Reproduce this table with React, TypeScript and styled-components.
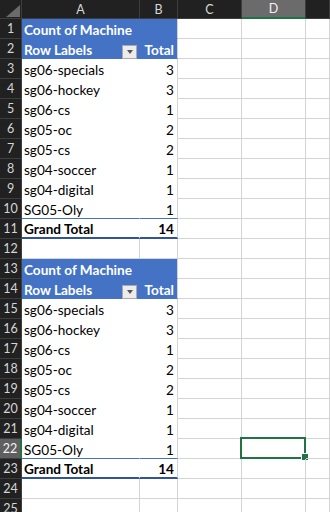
import React from "react"
import styled, { createGlobalStyle } from "styled-components"

const GRID = "#d4d4d4"
const BLUE = "#4472c4"
const DARK_BLUE = "#2f5597"
const GREEN = "#217346"
const HEAD_BG = "#212121"
const HEAD_LINE = "#3d3d3d"

type Item = [string, number]

const items: Item[] = [
	["sg06-specials", 3],
	["sg06-hockey", 3],
	["sg06-cs", 1],
	["sg05-oc", 2],
	["sg05-cs", 2],
	["sg04-soccer", 1],
	["sg04-digital", 1],
	["SG05-Oly", 1],
]

const pivotStarts = [1, 13]
const columns = ["A", "B", "C", "D", ""]
const ROW_COUNT = 25
const ACTIVE = { col: "D", row: 22 }

const GlobalStyle = createGlobalStyle`
	html, body {
		margin: 0;
		padding: 0;
		background: #ffffff;
	}
	body {
		font-family: Lato, "Liberation Sans", sans-serif;
		overflow: hidden;
	}
`

const Sheet = styled.div`
	display: grid;
	grid-template-columns: 22px 118px 38px 64px 64px 24px;
	grid-template-rows: 19px;
	grid-auto-rows: 20px;
	width: 330px;
	height: 512px;
	overflow: hidden;
	font-size: 13.6px;
`

const Corner = styled.div`
	box-sizing: border-box;
	background: ${HEAD_BG};
	border-right: 1px solid ${HEAD_LINE};
	border-bottom: 1px solid ${HEAD_LINE};
	display: flex;
	align-items: flex-end;
	justify-content: flex-end;
	padding: 0 1px 1px 0;
`

const ColHeader = styled.div<{ $selected?: boolean }>`
	box-sizing: border-box;
	background: ${(p) => (p.$selected ? "#6b6b6b" : HEAD_BG)};
	color: ${(p) => (p.$selected ? "#f2f2f2" : "#d6d6d6")};
	border-right: 1px solid ${HEAD_LINE};
	border-bottom: ${(p) => (p.$selected ? `2px solid ${GREEN}` : `1px solid ${HEAD_LINE}`)};
	display: flex;
	align-items: center;
	justify-content: center;
	font-size: 12.5px;
`

const RowHeader = styled.div<{ $selected?: boolean }>`
	box-sizing: border-box;
	background: ${(p) => (p.$selected ? "#5f5f5f" : HEAD_BG)};
	color: ${(p) => (p.$selected ? "#f2f2f2" : "#d6d6d6")};
	border-bottom: 1px solid ${HEAD_LINE};
	border-right: ${(p) => (p.$selected ? `2px solid ${GREEN}` : `1px solid ${HEAD_LINE}`)};
	display: flex;
	align-items: center;
	justify-content: center;
	font-size: 12.5px;
`

const Cell = styled.div<{ $right?: string; $bottom?: string; $numeric?: boolean }>`
	position: relative;
	box-sizing: border-box;
	border-right: 1px solid ${(p) => p.$right ?? GRID};
	border-bottom: ${(p) => p.$bottom ?? `1px solid ${GRID}`};
	display: flex;
	align-items: flex-end;
	justify-content: ${(p) => (p.$numeric ? "flex-end" : "flex-start")};
	padding: 0 3px 0 2px;
	line-height: 16px;
	color: #000000;
	white-space: nowrap;
`

const PivotHeadCell = styled(Cell)`
	background: ${BLUE};
	color: #ffffff;
	font-weight: 700;
`

const PivotTotalCell = styled(Cell)`
	font-weight: 700;
`

const FilterButton = styled.span`
	box-sizing: border-box;
	width: 15px;
	height: 14px;
	margin-left: auto;
	margin-right: -1px;
	margin-bottom: -1px;
	background: #ececec;
	border: 1px solid #a9a9a9;
	display: flex;
	align-items: center;
	justify-content: center;

	&::after {
		content: "";
		border-left: 3.5px solid transparent;
		border-right: 3.5px solid transparent;
		border-top: 4px solid #555555;
	}
`

const Selection = styled.div`
	position: absolute;
	top: -2px;
	left: -2px;
	right: -1px;
	bottom: -1px;
	border: 2px solid ${GREEN};
	pointer-events: none;
`

const FillHandle = styled.div`
	position: absolute;
	right: -3px;
	bottom: -2px;
	width: 6px;
	height: 6px;
	background: ${GREEN};
	box-shadow: 0 0 0 1px #ffffff;
`

const CornerTriangle: React.FC = () => (
	<svg width="14" height="12" viewBox="0 0 14 12">
		<polygon points="14,0 14,12 0,12" fill="#6b6b6b" />
	</svg>
)

const pivotCells = (row: number): React.ReactNode => {
	const start = pivotStarts.find((s) => row >= s && row <= s + 10)
	if (start === undefined) {
		return (
			<>
				<Cell />
				<Cell />
			</>
		)
	}
	const offset = row - start
	if (offset === 0) {
		return (
			<>
				<PivotHeadCell $right={BLUE} $bottom={`1px solid ${BLUE}`}>
					Count of Machine
				</PivotHeadCell>
				<PivotHeadCell $bottom={`1px solid ${BLUE}`} />
			</>
		)
	}
	if (offset === 1) {
		return (
			<>
				<PivotHeadCell $right={BLUE} $bottom={`1px solid ${BLUE}`}>
					Row Labels
					<FilterButton />
				</PivotHeadCell>
				<PivotHeadCell $numeric $bottom={`1px solid ${BLUE}`}>
					Total
				</PivotHeadCell>
			</>
		)
	}
	if (offset === 10) {
		const total = items.reduce((sum, [, count]) => sum + count, 0)
		return (
			<>
				<PivotTotalCell $right="#ffffff" $bottom={`2px solid ${DARK_BLUE}`}>
					Grand Total
				</PivotTotalCell>
				<PivotTotalCell $numeric $bottom={`2px solid ${DARK_BLUE}`}>
					{total}
				</PivotTotalCell>
			</>
		)
	}
	const [label, count] = items[offset - 2]
	const bottom = offset === 9 ? `1px solid ${BLUE}` : "1px solid #ffffff"
	return (
		<>
			<Cell $right="#ffffff" $bottom={bottom}>
				{label}
			</Cell>
			<Cell $numeric $bottom={bottom}>
				{count}
			</Cell>
		</>
	)
}

const App: React.FC = () => {
	const rows = Array.from({ length: ROW_COUNT }, (_, i) => i + 1)

	return (
		<>
			<GlobalStyle />
			<Sheet>
				<Corner>
					<CornerTriangle />
				</Corner>
				{columns.map((col, i) => (
					<ColHeader key={i} $selected={col === ACTIVE.col}>
						{col}
					</ColHeader>
				))}
				{rows.map((row) => (
					<React.Fragment key={row}>
						<RowHeader $selected={row === ACTIVE.row}>{row}</RowHeader>
						{pivotCells(row)}
						{columns.slice(2).map((col, i) => (
							<Cell key={i}>
								{col === ACTIVE.col && row === ACTIVE.row && (
									<>
										<Selection />
										<FillHandle />
									</>
								)}
							</Cell>
						))}
					</React.Fragment>
				))}
			</Sheet>
		</>
	)
}

export default App
